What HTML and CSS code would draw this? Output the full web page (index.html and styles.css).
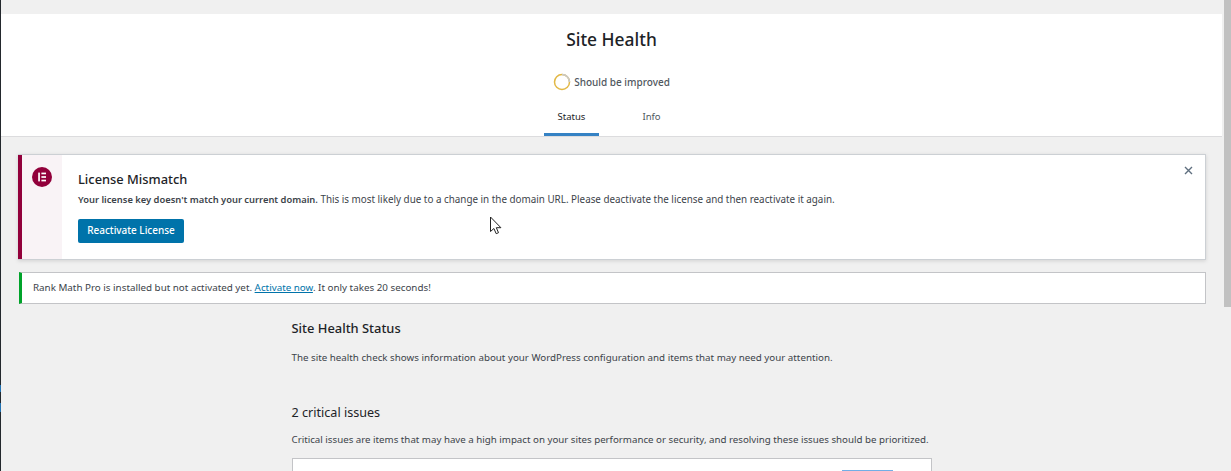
FILE: index.html
```html
<!DOCTYPE html>
<html lang="en">
<head>
<meta charset="utf-8">
<title>Site Health</title>
<link rel="stylesheet" href="styles.css">
</head>
<body>
<div class="app">
  <div class="adminbar"><span class="mark mark-a"></span><span class="mark mark-b"></span></div>
  <div class="page">
    <header class="head">
      <h1 class="title">Site Health</h1>
      <div class="progress">
        <svg class="ring" width="18" height="18" viewBox="0 0 18 18"><circle cx="9" cy="9" r="7.5" fill="none" stroke="#dba617" stroke-opacity=".8" stroke-width="1.5"/><path d="M9 1.5A7.5 7.5 0 0 1 16.5 9" fill="none" stroke="#c9c9c9" stroke-width="1.5"/></svg>
        <span class="progress-label">Should be improved</span>
      </div>
      <nav class="tabs">
        <a class="tab tab-active">Status</a>
        <a class="tab">Info</a>
      </nav>
    </header>
    <section class="notices">
      <div class="notice-el">
        <div class="el-side">
          <svg width="20" height="20" viewBox="0 0 20 20"><circle cx="10" cy="10" r="10" fill="#92003b"/><rect x="6.2" y="5.6" width="1.7" height="8.8" fill="#fff"/><rect x="9.4" y="5.6" width="4.6" height="1.7" fill="#fff"/><rect x="9.4" y="9.15" width="4.6" height="1.7" fill="#fff"/><rect x="9.4" y="12.7" width="4.6" height="1.7" fill="#fff"/></svg>
        </div>
        <div class="el-body">
          <h3 class="el-title">License Mismatch</h3>
          <p class="el-text"><strong class="el-strong">Your license key doesn't match your current domain.</strong> This is most likely due to a change in the domain URL. Please deactivate the license and then reactivate it again.</p>
          <a class="el-btn">Reactivate License</a>
        </div>
        <svg class="el-close" width="9" height="9" viewBox="0 0 9 9"><path d="M1 1l7 7M8 1L1 8" stroke="#5f6f7f" stroke-width="1.4" fill="none"/></svg>
        <svg class="cursor" width="14" height="20" viewBox="0 0 14 20"><path d="M1.5 1v14.5l3.4-3 2.3 5.2 2.3-1-2.2-5h4.6z" fill="#fff" stroke="#222" stroke-width="1"/></svg>
      </div>
      <div class="notice-rm">Rank Math Pro is installed but not activated yet. <a class="link">Activate now</a>. It only takes 20 seconds!</div>
    </section>
    <main class="body">
      <h2 class="h-status">Site Health Status</h2>
      <p class="p-status">The site health check shows information about your WordPress configuration and items that may need your attention.</p>
      <h3 class="h-issues">2 critical issues</h3>
      <p class="p-issues">Critical issues are items that may have a high impact on your sites performance or security, and resolving these issues should be prioritized.</p>
      <div class="issue"><span class="issue-badge"></span></div>
    </main>
  </div>
  <div class="scroll"><div class="thumb"></div></div>
</div>
</body>
</html>
```
FILE: styles.css
```css
* { box-sizing: border-box; }
html, body { margin: 0; height: 471px; overflow: hidden; }
body { background: #f0f0f0; font-family: "Noto Sans", "Open Sans", sans-serif; color: #1d2327; }
.app { display: flex; height: 471px; overflow: hidden; }
.adminbar { position: relative; width: 1px; flex: none; background: #23282d; }
.mark { position: absolute; left: 0; width: 1px; background: #2271b1; }
.mark-a { top: 385px; height: 7px; }
.mark-b { top: 403px; height: 9px; }
.page { flex: 1; min-width: 0; padding-top: 14px; margin-right: 2px; }
.head { background: #fff; height: 123px; border-bottom: 1px solid #dcdcde; display: flex; flex-direction: column; align-items: center; }
.title { margin: 13px 0 0; font-size: 17.4px; line-height: 25px; font-weight: 500; color: #1d2327; }
.progress { display: flex; align-items: center; gap: 3px; margin-top: 21px; height: 18px; }
.ring { display: block; }
.progress-label { font-size: 10px; color: #50575e; font-weight: 500; }
.tabs { display: flex; margin-top: 16px; }
.tab { width: 55px; height: 29px; margin: 0 12.5px; text-align: center; font-size: 9.5px; line-height: 19px; color: #50575e; }
.tab-active { border-bottom: 3px solid #3582c4; color: #1d2327; }
.notices { padding: 17px 16px 0 17px; }
.notice-el { position: relative; display: flex; height: 106px; background: #fff; border: 1px solid #ccd0d4; border-left: 0; box-shadow: 0 1px 4px rgba(0,0,0,.13); }
.el-side { width: 44px; flex: none; background: #f9f3f6; border-left: 4px solid #92003b; padding: 12px 0 0 10px; }
.el-body { padding: 15px 0 0 16px; }
.el-title { margin: 0; font-size: 12.85px; line-height: 18px; font-weight: 500; color: #1d2327; }
.el-text { margin: 3px 0 0; font-size: 9.85px; line-height: 16px; color: #3c434a; }
.el-strong { font-size: 9.35px; font-weight: 600; }
.el-btn { display: block; width: 106px; height: 24px; margin-top: 11px; background: #0073aa; border-radius: 2px; color: #fff; font-size: 9.95px; font-weight: 500; line-height: 23px; text-align: center; }
.el-close { position: absolute; top: 11px; right: 12px; }
.cursor { position: absolute; left: 471px; top: 61px; }
.notice-rm { height: 32px; margin: 12px 0 0 1px; background: #fff; border: 1px solid #c3c4c7; border-left: 3px solid #00a32a; padding-left: 11px; font-size: 9.82px; line-height: 29px; color: #3c434a; }
.link { color: #0073aa; text-decoration: underline; }
.body { width: 640px; margin-left: 291px; }
.h-status, .p-status, .h-issues, .p-issues { margin-left: -0.5px; }
.h-status { margin-top: 15px; margin-bottom: 0; font-size: 12.9px; line-height: 18px; font-weight: 500; }
.p-status { margin-top: 13px; margin-bottom: 0; font-size: 9.77px; line-height: 15px; color: #3c434a; }
.h-issues { margin-top: 39px; margin-bottom: 0; font-size: 12.6px; line-height: 18px; font-weight: 400; }
.p-issues { margin-top: 10px; margin-bottom: 0; font-size: 9.73px; line-height: 15px; color: #3c434a; }
.issue { height: 40px; margin-top: 11px; background: #fff; border: 1px solid #c3c4c7; padding: 11px 38px 0 0; display: flex; justify-content: flex-end; align-items: flex-start; }
.issue-badge { width: 51px; height: 1px; background: #72aee6; }
.scroll { width: 7px; flex: none; }
.thumb { height: 307px; background: #c1c1c1; }
```
